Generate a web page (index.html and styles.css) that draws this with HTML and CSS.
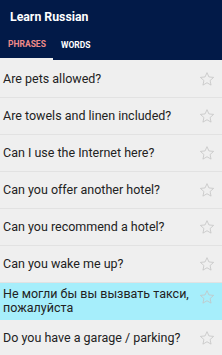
FILE: index.html
```html
<!DOCTYPE html>
<html>
<head>
<meta charset="utf-8">
<link rel="stylesheet" href="styles.css">
</head>
<body>
<div class="app">
  <header class="appbar">
    <div class="title">Learn Russian</div>
    <nav class="tabs">
      <div class="tab active">PHRASES</div>
      <div class="tab">WORDS</div>
    </nav>
  </header>
  <div class="list">
    <div class="row"><span class="text">Are pets allowed?</span><svg class="star" viewBox="0 0 24 24"><path d="M12 2.5l2.9 6.4 7 .7-5.3 4.7 1.5 6.9L12 17.6l-6.1 3.6 1.5-6.9L2.1 9.6l7-.7z"/></svg></div>
    <div class="row"><span class="text">Are towels and linen included?</span><svg class="star" viewBox="0 0 24 24"><path d="M12 2.5l2.9 6.4 7 .7-5.3 4.7 1.5 6.9L12 17.6l-6.1 3.6 1.5-6.9L2.1 9.6l7-.7z"/></svg></div>
    <div class="row"><span class="text">Can I use the Internet here?</span><svg class="star" viewBox="0 0 24 24"><path d="M12 2.5l2.9 6.4 7 .7-5.3 4.7 1.5 6.9L12 17.6l-6.1 3.6 1.5-6.9L2.1 9.6l7-.7z"/></svg></div>
    <div class="row"><span class="text">Can you offer another hotel?</span><svg class="star" viewBox="0 0 24 24"><path d="M12 2.5l2.9 6.4 7 .7-5.3 4.7 1.5 6.9L12 17.6l-6.1 3.6 1.5-6.9L2.1 9.6l7-.7z"/></svg></div>
    <div class="row"><span class="text">Can you recommend a hotel?</span><svg class="star" viewBox="0 0 24 24"><path d="M12 2.5l2.9 6.4 7 .7-5.3 4.7 1.5 6.9L12 17.6l-6.1 3.6 1.5-6.9L2.1 9.6l7-.7z"/></svg></div>
    <div class="row"><span class="text">Can you wake me up?</span><svg class="star" viewBox="0 0 24 24"><path d="M12 2.5l2.9 6.4 7 .7-5.3 4.7 1.5 6.9L12 17.6l-6.1 3.6 1.5-6.9L2.1 9.6l7-.7z"/></svg></div>
    <div class="row selected"><span class="text">Не могли бы вы вызвать такси, пожалуйста</span><svg class="star" viewBox="0 0 24 24"><path d="M12 2.5l2.9 6.4 7 .7-5.3 4.7 1.5 6.9L12 17.6l-6.1 3.6 1.5-6.9L2.1 9.6l7-.7z"/></svg></div>
    <div class="row"><span class="text">Do you have a garage / parking?</span><svg class="star" viewBox="0 0 24 24"><path d="M12 2.5l2.9 6.4 7 .7-5.3 4.7 1.5 6.9L12 17.6l-6.1 3.6 1.5-6.9L2.1 9.6l7-.7z"/></svg></div>
  </div>
</div>
</body>
</html>
```
FILE: styles.css
```css
html, body {
  margin: 0;
  padding: 0;
  background: #efefef;
}
.app {
  width: 222px;
  height: 355px;
  overflow: hidden;
  font-family: Roboto, "Noto Sans", sans-serif;
  background: #efefef;
}
.appbar {
  background: #021a48;
  height: 60px;
  display: flex;
  flex-direction: column;
}
.title {
  color: #ffffff;
  font-weight: bold;
  font-size: 12.3px;
  line-height: 16px;
  padding: 9px 0 0 10px;
  height: 26px;
  box-sizing: border-box;
}
.tabs {
  display: flex;
  margin-top: auto;
  height: 30px;
}
.tab {
  color: #ffffff;
  font-weight: bold;
  font-size: 8.5px;
  line-height: 30px;
  padding: 0 7px 0 8px;
  box-sizing: border-box;
  height: 30px;
}
.tab.active {
  color: #f08a88;
  width: 53px;
  border-bottom: 2px solid #efefef;
  line-height: 28px;
}
.list {
  padding-top: 1px;
  display: flex;
  flex-direction: column;
}
.row {
  display: flex;
  align-items: center;
  height: 37px;
  box-sizing: border-box;
  border-bottom: 1px solid #e2e2e2;
  padding: 0 7px 0 3px;
}
.row.selected {
  background: #a6eefb;
  border-bottom-color: #a6eefb;
}
.text {
  flex: 1;
  color: #222222;
  font-size: 12.5px;
  line-height: 14px;
}
.star {
  width: 16px;
  height: 16px;
  flex: none;
  fill: none;
  stroke: #c4c4c4;
  stroke-width: 1.2;
  stroke-linejoin: miter;
}
.row.selected .star {
  align-self: flex-start;
  margin-top: 6px;
}
```
